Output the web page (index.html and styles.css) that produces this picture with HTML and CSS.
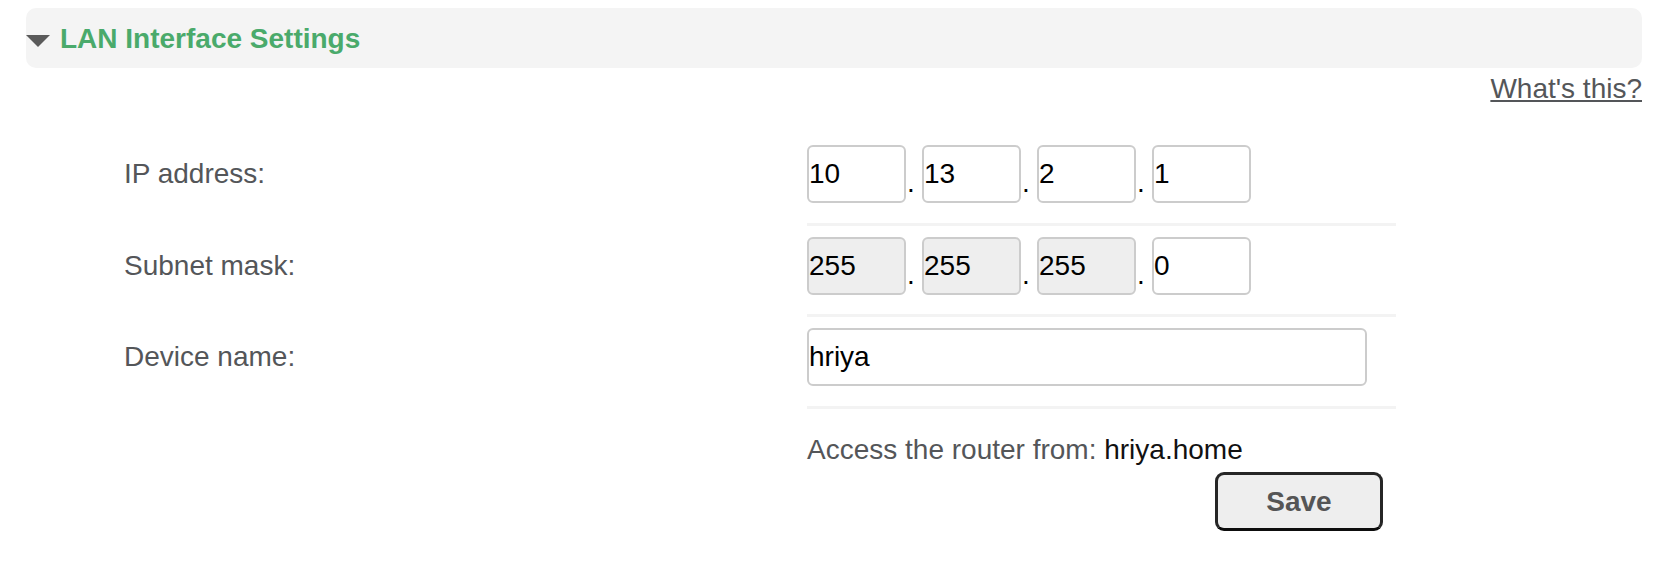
FILE: index.html
```html
<!DOCTYPE html>
<html lang="en">
<head>
<meta charset="utf-8">
<title>LAN Interface Settings</title>
<link rel="stylesheet" href="styles.css">
</head>
<body>
<div class="page">
  <div class="section-header">
    <span class="caret"></span>
    <h2 class="section-title">LAN Interface Settings</h2>
  </div>
  <div class="help-row"><a class="help-link" href="#">What's this?</a></div>

  <form class="settings">
    <div class="row">
      <div class="label">IP address:</div>
      <div class="field">
        <div class="ip-group">
          <input class="octet" type="text" value="10">
          <span class="dot">.</span>
          <input class="octet" type="text" value="13">
          <span class="dot">.</span>
          <input class="octet" type="text" value="2">
          <span class="dot">.</span>
          <input class="octet" type="text" value="1">
        </div>
      </div>
    </div>

    <div class="row">
      <div class="label">Subnet mask:</div>
      <div class="field">
        <div class="ip-group">
          <input class="octet" type="text" value="255" disabled>
          <span class="dot">.</span>
          <input class="octet" type="text" value="255" disabled>
          <span class="dot">.</span>
          <input class="octet" type="text" value="255" disabled>
          <span class="dot">.</span>
          <input class="octet" type="text" value="0">
        </div>
      </div>
    </div>

    <div class="row">
      <div class="label">Device name:</div>
      <div class="field">
        <input class="text-input" type="text" value="hriya">
      </div>
    </div>

    <div class="row">
      <div class="label"></div>
      <div class="field field-last">
        <p class="access">Access the router from: <span class="host">hriya.home</span></p>
        <button class="save-btn" type="button">Save</button>
      </div>
    </div>
  </form>
</div>
</body>
</html>
```

FILE: styles.css
```css
html, body {
  margin: 0;
  padding: 0;
  background: #ffffff;
}

body {
  font-family: "Liberation Sans", Arial, Helvetica, sans-serif;
  font-size: 28px;
  color: #545659;
}

.page {
  padding: 8px 30px 0 26px;
}

.section-header {
  display: flex;
  align-items: center;
  height: 60px;
  background: #f4f4f4;
  border-radius: 10px;
}

.caret {
  width: 0;
  height: 0;
  border-left: 12px solid transparent;
  border-right: 12px solid transparent;
  border-top: 12px solid #5a5a5a;
  margin-top: 6px;
  margin-right: 10px;
}

.section-title {
  margin: 0;
  padding-top: 1px;
  font-size: 28px;
  font-weight: bold;
  color: #4aaa6b;
}

.help-row {
  margin-top: 5px;
  height: 32px;
  line-height: 32px;
  text-align: right;
}

.help-link {
  color: #545659;
  text-decoration: underline;
}

.settings {
  margin-top: 40px;
  padding-left: 98px;
}

.row {
  display: flex;
  align-items: flex-start;
}

.label {
  width: 683px;
  height: 58px;
  display: flex;
  align-items: center;
  line-height: 32px;
}

.field {
  width: 589px;
  padding-bottom: 19.5px;
  border-bottom: 3px solid #f3f3f3;
  margin-bottom: 11px;
}

.field-last {
  border-bottom: none;
  padding-top: 14.5px;
  padding-bottom: 0;
  margin-bottom: 0;
}

.ip-group {
  display: flex;
  align-items: flex-start;
}

.octet,
.text-input {
  box-sizing: border-box;
  height: 58px;
  border: 2px solid #cccccc;
  border-radius: 6px;
  padding: 0 2px 0 0;
  font-family: "Liberation Sans", Arial, Helvetica, sans-serif;
  font-size: 28px;
  color: #000000;
  background: #ffffff;
  outline: none;
}

.octet {
  width: 99px;
}

.octet:disabled {
  background: #eeeeee;
  color: #000000;
  -webkit-text-fill-color: #000000;
  opacity: 1;
}

.dot {
  box-sizing: border-box;
  width: 16px;
  padding-left: 1px;
  align-self: flex-end;
  line-height: 28px;
  margin-bottom: 6px;
  color: #000000;
}

.text-input {
  width: 560px;
}

.access {
  margin: 0;
  line-height: 32px;
  color: #545659;
}

.host {
  color: #111111;
}

.save-btn {
  display: block;
  box-sizing: border-box;
  width: 168px;
  height: 59px;
  margin: 6px 0 0 408px;
  border: 3px solid #262626;
  border-bottom-color: #0d0d0d;
  border-radius: 9px;
  background: #eeeeee;
  font-family: "Liberation Sans", Arial, Helvetica, sans-serif;
  font-size: 28px;
  font-weight: bold;
  color: #555555;
  padding: 0;
}
```
